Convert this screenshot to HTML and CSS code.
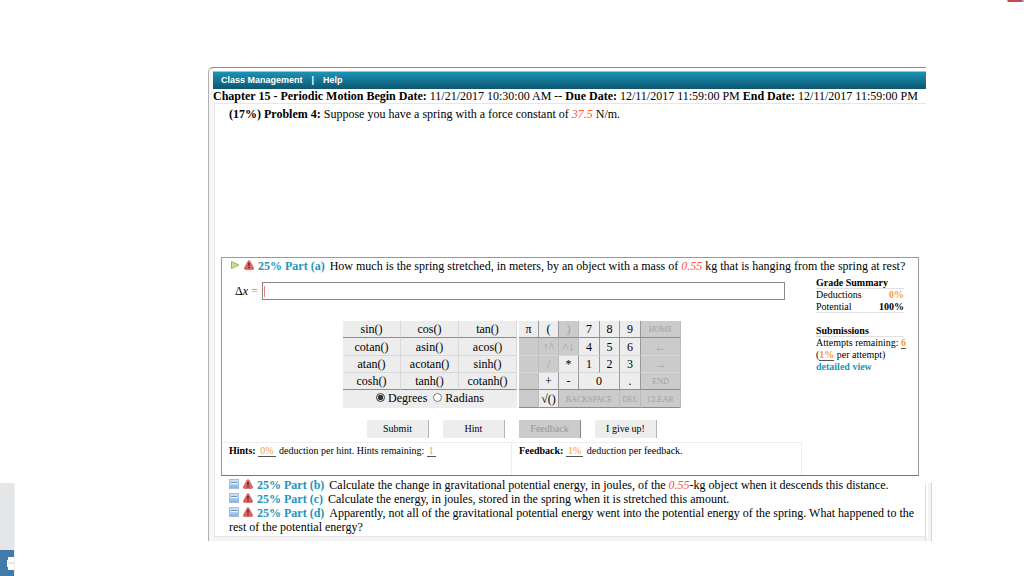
FILE: index.html
```html
<!DOCTYPE html>
<html lang="en">
<head>
<meta charset="utf-8">
<title>Chapter 15 - Periodic Motion</title>
<link rel="stylesheet" href="styles.css">
</head>
<body>
<svg class="defs" aria-hidden="true">
  <defs>
    <linearGradient id="blue" x1="0" y1="0" x2="0" y2="1"><stop offset="0" stop-color="#d3e4f5"/><stop offset=".5" stop-color="#b4d0ee"/><stop offset="1" stop-color="#78aee4"/></linearGradient>
    <symbol id="warn" viewBox="0 0 10 10"><path d="M4.2 1Q5 0 5.8 1L9.5 8Q9.8 9.4 8.6 9.4H1.4Q.2 9.4.5 8Z" fill="#e2605f" stroke="#d05050" stroke-width=".7"/><path d="M4.3 3h1.4L5.4 6.4h-.8Z" fill="#40181a"/><rect x="4.4" y="7" width="1.2" height="1.2" fill="#40181a"/></symbol>
    <symbol id="box" viewBox="0 0 10 10"><rect x=".5" y=".5" width="9" height="9" fill="url(#blue)" stroke="#a5bcd8"/><rect x="2" y="3" width="6" height="2" fill="#6d93be"/><rect x="2" y="4" width="6" height="1" fill="#f4f9ff"/></symbol>
    <symbol id="play" viewBox="0 0 10 10"><path d="M1.5 1.5 8.8 5 1.5 8.5Z" fill="#c7e39a" stroke="#8fb35e" stroke-width="1" stroke-linejoin="round"/></symbol>
  </defs>
</svg>
<div class="corner"></div>
<aside class="share"><div class="share-badge"><svg viewBox="0 0 14 26"><path d="M14 7H8v3H7v7h1v3h6z" fill="#fff"/><path d="M8 13h6" stroke="#ccd4db"/></svg></div></aside>

<main class="frame">
  <nav class="menu"><a href="#class">Class Management</a><span>|</span><a href="#help">Help</a></nav>
  <div class="dates"><b>Chapter 15 - Periodic Motion Begin Date:</b> 11/21/2017 10:30:00 AM -- <b>Due Date:</b> 12/11/2017 11:59:00 PM <b>End Date:</b> 12/11/2017 11:59:00 PM</div>
  <div class="sheet">
    <p class="statement"><b>(17%) Problem 4:</b> Suppose you have a spring with a force constant of <em>37.5</em> N/m.</p>

    <section class="panel">
      <div class="part part-open"><svg class="icon"><use href="#play"/></svg><svg class="icon"><use href="#warn"/></svg><b class="label">25% Part (a)</b>How much is the spring stretched, in meters, by an object with a mass of <em>0.55</em> kg that is hanging from the spring at rest?</div>
      <div class="work">
        <div class="entry">
          <div class="answer"><label for="answer">Δ<i>x</i> <span class="equals">=</span></label><span class="field"><input id="answer" type="text"></span></div>
          <div class="pads">
            <div class="functions">
              <button>sin()</button><button>cos()</button><button>tan()</button>
              <button>cotan()</button><button>asin()</button><button>acos()</button>
              <button>atan()</button><button>acotan()</button><button>sinh()</button>
              <button>cosh()</button><button>tanh()</button><button>cotanh()</button>
              <div class="angle"><label><input type="radio" name="angle" checked>Degrees</label><label><input type="radio" name="angle">Radians</label></div>
            </div>
            <div class="keys">
              <button>π</button><button>(</button><button disabled>)</button><button>7</button><button>8</button><button>9</button><button class="word" disabled>HOME</button>
              <button disabled aria-label="blank"></button><button disabled>↑^</button><button disabled>^↓</button><button>4</button><button>5</button><button>6</button><button class="arrow" disabled>←</button>
              <button disabled aria-label="blank"></button><button disabled>/</button><button>*</button><button>1</button><button>2</button><button>3</button><button class="arrow" disabled>→</button>
              <button disabled aria-label="blank"></button><button>+</button><button>-</button><button class="two">0</button><button>.</button><button class="word" disabled>END</button>
              <button disabled aria-label="blank"></button><button>√()</button><button class="word three" disabled>BACKSPACE</button><button class="word" disabled>DEL</button><button class="word" disabled>CLEAR</button>
            </div>
          </div>
          <div class="actions"><button>Submit</button><button>Hint</button><button disabled>Feedback</button><button>I give up!</button></div>
        </div>
        <aside class="grades">
          <h2>Grade Summary</h2>
          <div class="score"><span>Deductions</span><b class="orange">0%</b></div>
          <div class="score last"><span>Potential</span><b>100%</b></div>
          <h2>Submissions</h2>
          <div>Attempts remaining: <b class="orange blank">6</b></div>
          <div>(<b class="orange blank">1%</b> per attempt)</div>
          <a href="#detail">detailed view</a>
        </aside>
      </div>
      <div class="help">
        <div><b>Hints:</b> <span class="orange blank wide">0%</span> deduction per hint. Hints remaining: <span class="orange blank wide">1</span></div>
        <div><b>Feedback:</b> <span class="orange blank wide">1%</span> deduction per feedback.</div>
      </div>
    </section>

    <div class="parts">
      <div class="part"><svg class="icon"><use href="#box"/></svg><svg class="icon"><use href="#warn"/></svg><b class="label">25% Part (b)</b>Calculate the change in gravitational potential energy, in joules, of the <em>0.55</em>-kg object when it descends this distance.</div>
      <div class="part"><svg class="icon"><use href="#box"/></svg><svg class="icon"><use href="#warn"/></svg><b class="label">25% Part (c)</b>Calculate the energy, in joules, stored in the spring when it is stretched this amount.</div>
      <div class="part"><svg class="icon"><use href="#box"/></svg><svg class="icon"><use href="#warn"/></svg><b class="label">25% Part (d)</b>Apparently, not all of the gravitational potential energy went into the potential energy of the spring. What happened to the rest of the potential energy?</div>
    </div>
  </div>
</main>
</body>
</html>
```
FILE: styles.css
```css
*, *::after { box-sizing: border-box; }
body {
  margin: 0;
  padding: 67px 98px 0 208px;
  background: #fff;
  color: #000;
  font: 12px/14px "Liberation Serif", "Times New Roman", serif;
}
button, input { font: inherit; }
em { color: #ff5340; }
.defs { position: absolute; width: 0; height: 0; }
.corner { position: absolute; top: 0; right: 0; width: 17px; height: 2px; background: #c94a4a; border-left: 1px solid #e3a0a0; border-right: 2px solid #8fb4d8; }
.share { position: fixed; left: 0; bottom: 0; width: 15px; height: 93px; padding-top: 67px; background: #e4e6e8; border-right: 1px solid #eff0f1; }
.share-badge { height: 26px; background: #427ba9; }
.share-badge svg { display: block; width: 14px; height: 26px; }

.frame {
  position: relative;
  padding: 3px 0 4px 4px;
  border-top: 1px solid #8c8c8c;
  border-left: 1px solid #b0b0b0;
  border-top-left-radius: 5px;
  background: linear-gradient(#f6f6f6, #f6f6f6) left / 5px 100% no-repeat, linear-gradient(#f4f4f4, #f4f4f4) bottom / 100% 4px no-repeat;
}
.frame::after {
  content: "";
  position: absolute;
  right: -6px;
  bottom: 0;
  width: 7px;
  height: 58px;
  border-left: 1px solid #ddd;
  border-right: 1px solid #d4d4d4;
  background: linear-gradient(#f4f4f4, #f4f4f4) bottom / 100% 4px no-repeat, linear-gradient(#f4f4f4, #f4f4f4) right / 3px 100% no-repeat;
}
.menu {
  display: flex;
  gap: 9px;
  padding: 1px 8px;
  border-top: 1px solid #8fc6d8;
  background: linear-gradient(#1b93b5, #0d5670);
  color: #fff;
  font: bold 9px/15px "Liberation Sans", Arial, sans-serif;
}
.menu a { color: inherit; text-decoration: none; }
.dates { white-space: nowrap; }
.sheet { margin-left: 1px; padding: 0 7px 2px 6px; border: 1px solid #e6e6e6; border-right: 0; background: #fff; }
.statement { min-height: 153px; margin: 0; padding: 3px 8px; }

.panel { border: 1px solid #999; border-bottom-color: #777; }
.part-open { padding: 1px 7px 1px 8px; }
.icon { width: 10px; height: 10px; margin-right: 4px; vertical-align: 0; }
.label { margin-right: 5px; color: #2295bb; }
.work { display: flex; justify-content: space-between; padding: 0 14px 0 13px; }
.entry { width: 550px; padding-top: 8px; }
.answer { display: flex; align-items: center; gap: 4px; }
.equals { color: #999; }
.answer label { width: 23px; white-space: nowrap; }
.field { position: relative; flex: 1; display: flex; }
.field input { width: 100%; height: 18px; padding: 0 4px; border: 1px solid #888; background: #fff; }
.field::after { content: ""; position: absolute; left: 2px; top: 4px; width: 1px; height: 11px; background: #f08080; }
.pads { display: flex; justify-content: center; gap: 2px; margin: 21px 0 0 4px; }
.functions { display: grid; grid-template-columns: repeat(3, 58px); grid-auto-rows: 17px 18px 17px 17px 18px; background: #ededed; }
.keys { display: grid; grid-template-columns: 20px 20px 20px 21px 20px 21px 40px; grid-auto-rows: 17px 18px 17px 17px 18px; background: #ededed; }
.pads button { padding: 1px 0 0; border: 0 solid; border-width: 0 1px 1px 0; border-color: #d8d8d8; background: #ededed; line-height: 15px; white-space: nowrap; }
.functions button:nth-child(-n+3), .functions button:nth-child(n+10), .keys button:nth-child(-n+7), .keys button:nth-child(n+22) { border-bottom-color: #8c8c8c; }
.pads .keys button { border-right-color: #999; }
.pads .keys button:disabled { background: #cbcbcb; color: #a2a2a2; border-right-color: #bbb; }
.pads .keys .word { font-size: 8px; }
.two { grid-column: span 2; }
.three { grid-column: span 3; }
.angle { grid-column: span 3; display: flex; justify-content: center; gap: 6px; line-height: 16px; }
.angle label { display: flex; }
.angle input { width: 9px; height: 9px; margin: 3px 3px 0 0; accent-color: #333; }
.actions { display: flex; justify-content: center; gap: 14px; margin-top: 12px; padding-left: 4px; }
.actions button { width: 62px; height: 18px; padding: 0; border: 0 solid #b5b5b5; border-right-width: 1px; background: #ededed; font-size: 10px; }
.actions button:disabled { background: #cbcbcb; color: #999; border-color: #888; }

.grades { width: 88px; padding-top: 3px; font-size: 10px; line-height: 12px; white-space: nowrap; }
.grades h2 { margin: 0; border-bottom: 1px solid #e0e0e0; font-size: 10px; line-height: 11px; }
.score { display: flex; justify-content: space-between; line-height: 12px; }
.last { margin-bottom: 12px; border-bottom: 1px solid #e0e0e0; line-height: 11px; }
.grades a { color: #2295bb; font-weight: bold; text-decoration: none; }
.orange { color: #ff9a1f; }
.blank { border-bottom: 1px solid #555; }
.wide { margin-right: 1px; padding: 0 2px; }
.help { display: grid; grid-template-columns: 290px 290px; margin-top: 4px; font-size: 10px; line-height: 12px; }
.help div { min-height: 33px; padding: 2px 7px; border: 0 solid #eee; border-width: 1px 1px 0 0; }
.parts { padding: 2px 0 0 8px; }
.parts .icon { vertical-align: 0; }
```
